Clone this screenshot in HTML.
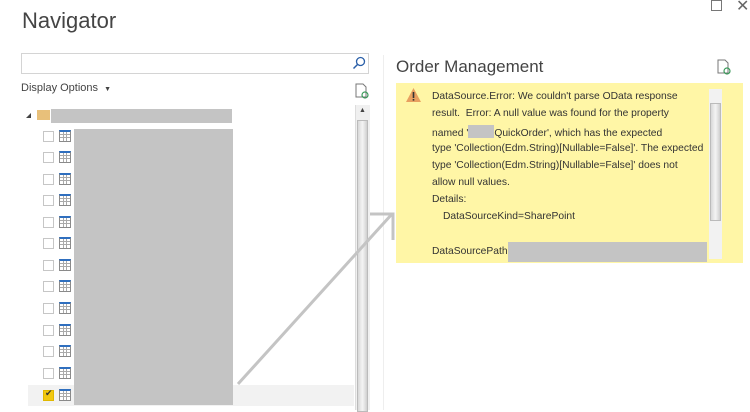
<!DOCTYPE html>
<html><head><style>
body{margin:0;width:750px;height:410px;background:#fff;position:relative;overflow:hidden;font-family:"Liberation Sans",sans-serif;color:#333}
.a{position:absolute}
.cb{position:absolute;left:43px;width:9px;height:9px;border:1px solid #c6c6c6;background:#fff}
.tb{position:absolute;left:59px;width:10px;height:9px;border:1px solid #8a8a8a;border-top:2px solid #2f6fbf;background:
linear-gradient(90deg,transparent 3px,#aaa 3px,#aaa 4px,transparent 4px,transparent 6px,#aaa 6px,#aaa 7px,transparent 7px),
linear-gradient(180deg,transparent 2px,#aaa 2px,#aaa 3px,transparent 3px,transparent 5px,#aaa 5px,#aaa 6px,transparent 6px);background-color:#fff}
.t{position:absolute;left:432px;font-size:10.3px;color:#333;white-space:nowrap}
</style></head><body>
<div class="a" style="left:22px;top:8px;font-size:22px;color:#444">Navigator</div>
<div class="a" style="left:711px;top:0px;width:9px;height:9px;border:1px solid #777"></div>
<div class="a" style="left:736px;top:-4px;font-size:16px;color:#666">✕</div>
<div class="a" style="left:21px;top:53px;width:346px;height:19px;border:1px solid #d4d4d4"></div>
<svg class="a" style="left:352px;top:56px" width="14" height="14"><circle cx="8.5" cy="5.5" r="4" fill="none" stroke="#2a5fa8" stroke-width="1.3"/><line x1="5.5" y1="8.5" x2="1.5" y2="12.5" stroke="#2a5fa8" stroke-width="1.5"/></svg>
<div class="a" style="left:21px;top:82px;font-size:11px;color:#444">Display Options &nbsp;<span style="font-size:7px">▼</span></div>
<svg class="a" style="left:355px;top:83px" width="14" height="16"><path d="M1 1H8L11 4V14H1Z" fill="#fff" stroke="#777"/><circle cx="10" cy="12" r="3" fill="none" stroke="#3a9a5a" stroke-width="1.2"/></svg>
<div class="a" style="left:26px;top:113px;width:0;height:0;border-left:5px solid transparent;border-bottom:5px solid #444"></div>
<div class="a" style="left:37px;top:110px;width:13px;height:10px;background:#e8c07a"></div>
<div class="a" style="left:51px;top:109px;width:181px;height:14px;background:#c4c4c4"></div>
<div class="a" style="left:28px;top:385px;width:326px;height:21px;background:#f2f2f2"></div>
<div id="rows"></div>
<div class="a" style="left:74px;top:129px;width:159px;height:276px;background:#c4c4c4"></div>
<div class="a" style="left:355px;top:105px;width:14px;height:305px;background:#f0f0f0;border-left:1px solid #ddd"></div>
<div class="a" style="left:357px;top:120px;width:9px;height:290px;background:linear-gradient(90deg,#d8d8d8,#f4f4f4,#cfcfcf);border:1px solid #bbb"></div>
<div class="a" style="left:359px;top:107px;font-size:7px;color:#444">▲</div>
<div class="a" style="left:383px;top:55px;width:1px;height:355px;background:#eee"></div>
<div class="a" style="left:396px;top:57px;font-size:17px;color:#444">Order Management</div>
<svg class="a" style="left:717px;top:59px" width="14" height="16"><path d="M1 1H8L11 4V14H1Z" fill="#fff" stroke="#777"/><circle cx="10" cy="12" r="3" fill="none" stroke="#3a9a5a" stroke-width="1.2"/></svg>
<div class="a" style="left:396px;top:83px;width:347px;height:180px;background:#fff6a6"></div>
<div class="a" style="left:709px;top:89px;width:13px;height:170px;background:#f2f2f2"></div>
<div class="a" style="left:710px;top:103px;width:9px;height:116px;background:linear-gradient(90deg,#d8d8d8,#f4f4f4,#cfcfcf);border:1px solid #bbb"></div>
<svg class="a" style="left:405px;top:87px" width="17" height="16"><path d="M8.5 1L16 15H1Z" fill="#e8a060"/><rect x="7.7" y="5" width="1.6" height="6" fill="#333"/><rect x="7.7" y="12" width="1.6" height="1.6" fill="#333"/></svg>
<div class="t" style="top:91px">DataSource.Error: We couldn't parse OData response</div>
<div class="t" style="top:108px">result.&nbsp; Error: A null value was found for the property</div>
<div class="t" style="top:125px">named '<span style="display:inline-block;width:26px;height:13px;background:#c4c4c4;vertical-align:-2px"></span>QuickOrder', which has the expected</div>
<div class="t" style="top:143px">type 'Collection(Edm.String)[Nullable=False]'. The expected</div>
<div class="t" style="top:160px">type 'Collection(Edm.String)[Nullable=False]' does not</div>
<div class="t" style="top:177px">allow null values.</div>
<div class="t" style="top:194px">Details:</div>
<div class="t" style="top:211px;left:443px">DataSourceKind=SharePoint</div>
<div class="t" style="top:246px">DataSourcePath=</div>
<div class="a" style="left:508px;top:242px;width:199px;height:20px;background:#c4c4c4"></div>
<svg class="a" style="left:0;top:0" width="750" height="410"><path d="M238 384L392 214M370 214H393V240" fill="none" stroke="#c4c4c4" stroke-width="3"/></svg>
<script>
var ys=[136,157,179,200,222,243,265,286,308,330,351,373,395],h='';
ys.forEach(function(y,i){h+='<div class="cb" style="top:'+(y-5)+'px'+(i==12?';background:#f2c811;border-color:#e0b800':'')+'">'+(i==12?'<span style="position:absolute;left:1px;top:-3px;font-size:9px;color:#333">✔</span>':'')+'</div><div class="tb" style="top:'+(y-6)+'px"></div>'});
document.getElementById('rows').innerHTML=h;
</script>
</body></html>
